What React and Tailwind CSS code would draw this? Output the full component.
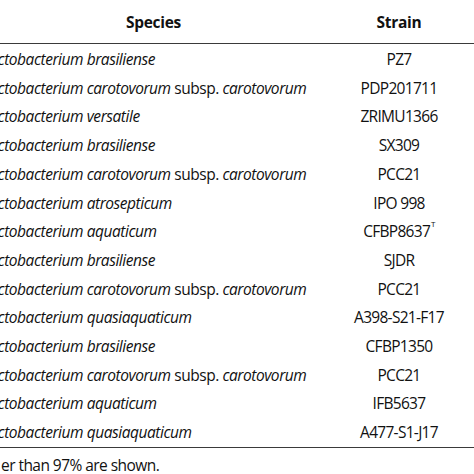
const rows = [
  ["brasiliense", null, "PZ7"],
  ["carotovorum", "carotovorum", "PDP201711"],
  ["versatile", null, "ZRIMU1366"],
  ["brasiliense", null, "SX309"],
  ["carotovorum", "carotovorum", "PCC21"],
  ["atrosepticum", null, "IPO 998"],
  ["aquaticum", null, "CFBP8637", true],
  ["brasiliense", null, "SJDR"],
  ["carotovorum", "carotovorum", "PCC21"],
  ["quasiaquaticum", null, "A398-S21-F17"],
  ["brasiliense", null, "CFBP1350"],
  ["carotovorum", "carotovorum", "PCC21"],
  ["aquaticum", null, "IFB5637"],
  ["quasiaquaticum", null, "A477-S1-J17"],
];

export default function App() {
  return (
    <div
      className="w-[474px] h-[474px] overflow-hidden bg-white text-[#111111]"
      style={{ fontFamily: '"Open Sans", "Noto Sans", sans-serif' }}
    >
      <div className="flex h-[44px] items-center border-b-[1.5px] border-[#3a3a3a] pt-[3px] text-[15.5px] font-bold">
        <div className="w-[324px] pl-[126px] tracking-[-0.3px]">Species</div>
        <div className="flex-1 text-center tracking-[-0.3px]">Strain</div>
      </div>
      <div className="flex flex-col pt-[1.5px]">
        {rows.map(([sp, sub, strain, t], i) => (
          <div key={i} className="flex h-[28.7px] items-center text-[15.5px] font-medium leading-none">
            <div className="w-[324px] whitespace-nowrap tracking-[-0.45px]">
              <span className="ml-[-18px] inline-block">
                <i>Pectobacterium {sp}</i>
                {sub && (
                  <>
                    {" "}subsp. <i>{sub}</i>
                  </>
                )}
              </span>
            </div>
            <div className="flex-1 text-center whitespace-nowrap tracking-[-0.7px]">
              {strain}
              {t && <sup className="text-[8px] align-super ml-[1px]">T</sup>}
            </div>
          </div>
        ))}
      </div>
      <div className="border-t-[1.5px] border-[#3a3a3a] pt-[6px] pl-[1px] text-[15.5px] font-medium whitespace-nowrap tracking-[-0.55px]">
        er than 97% are shown.
      </div>
    </div>
  );
}
